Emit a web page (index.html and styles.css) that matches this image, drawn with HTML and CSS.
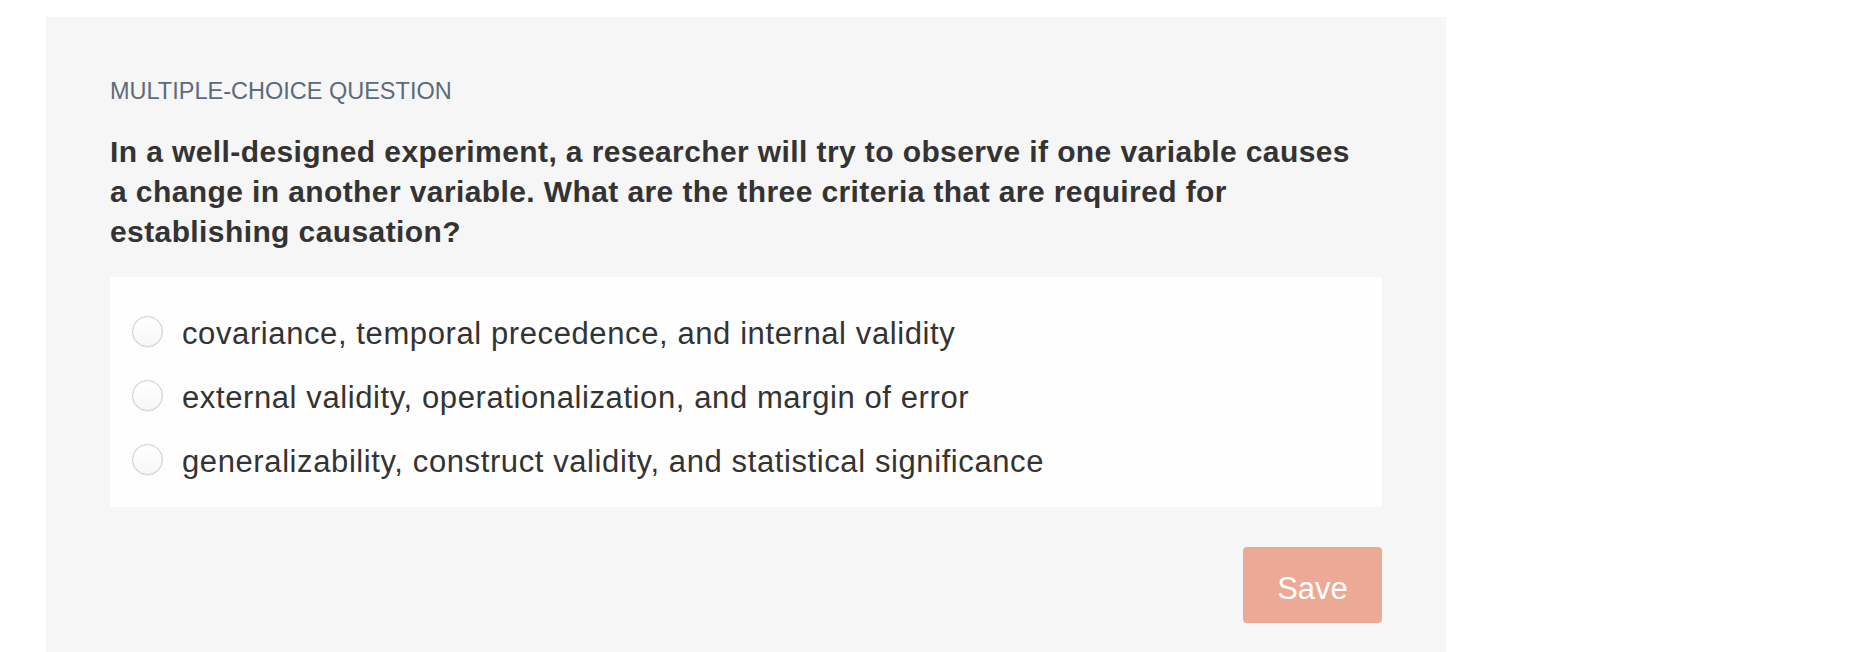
FILE: index.html
```html
<!DOCTYPE html>
<html lang="en">
<head>
<meta charset="utf-8">
<title>Multiple-choice question</title>
<link rel="stylesheet" href="styles.css">
</head>
<body>
  <div class="card">
    <div class="label">MULTIPLE-CHOICE QUESTION</div>
    <div class="question">In a well-designed experiment, a researcher will try to observe if one variable causes a change in another variable. What are the three criteria that are required for establishing causation?</div>
    <div class="choices">
      <label class="choice"><span class="radio"></span><span class="choice-text">covariance, temporal precedence, and internal validity</span></label>
      <label class="choice"><span class="radio"></span><span class="choice-text">external validity, operationalization, and margin of error</span></label>
      <label class="choice"><span class="radio"></span><span class="choice-text">generalizability, construct validity, and statistical significance</span></label>
    </div>
    <div class="actions">
      <button class="save" type="button">Save</button>
    </div>
  </div>
</body>
</html>
```

FILE: styles.css
```css
html, body {
  margin: 0;
  padding: 0;
  background: #ffffff;
}

body {
  padding: 17px 0 0 46px;
  font-family: "Liberation Sans", Arial, sans-serif;
}

.card {
  width: 1400px;
  box-sizing: border-box;
  background: #f6f6f6;
  padding: 60px 64px 40px 64px;
}

.label {
  font-size: 23.5px;
  line-height: 28px;
  color: #5b6b7a;
}

.question {
  margin-top: 27px;
  padding-right: 12px;
  font-size: 30px;
  line-height: 40px;
  font-weight: bold;
  letter-spacing: 0.4px;
  color: #333333;
}

.choices {
  margin-top: 25px;
  background: #fefefe;
  padding: 25px 22px 13px 22px;
}

.choice {
  display: flex;
  align-items: flex-start;
  height: 64px;
  line-height: 64px;
  font-size: 31px;
  letter-spacing: 0.6px;
  color: #333333;
}

.radio {
  flex: none;
  width: 29px;
  height: 29px;
  margin-top: 14px;
  margin-right: 19px;
  border: 1px solid #c9c9c9;
  border-radius: 50%;
  background: linear-gradient(#ffffff, #f7f7f7);
  box-shadow: 0 1px 1px rgba(0, 0, 0, 0.06);
}

.actions {
  display: flex;
  justify-content: flex-end;
  margin-top: 40px;
}

.save {
  box-sizing: border-box;
  width: 139px;
  height: 76px;
  border: none;
  border-radius: 4px;
  background: #eba996;
  color: #ffffff;
  font-family: "Liberation Sans", Arial, sans-serif;
  font-size: 31px;
  line-height: 69px;
  padding: 7px 0 0 0;
}
```
